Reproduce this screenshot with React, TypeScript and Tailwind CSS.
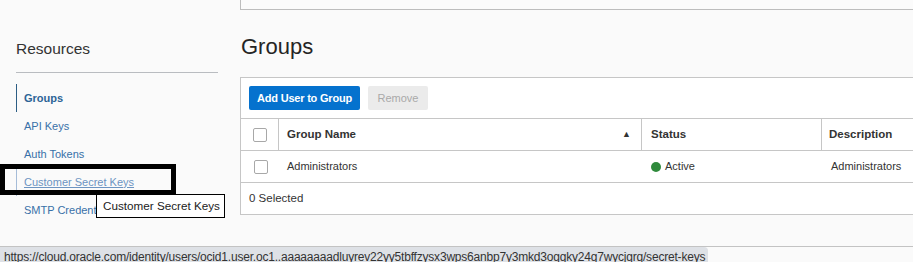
import React from 'react'

const NAV_ITEMS = [
  { label: 'Groups', state: 'active' },
  { label: 'API Keys', state: 'idle' },
  { label: 'Auth Tokens', state: 'idle' },
  { label: 'Customer Secret Keys', state: 'hover' },
  { label: 'SMTP Credentials', state: 'idle' },
]

const STATUS_URL =
  'https://cloud.oracle.com/identity/users/ocid1.user.oc1..aaaaaaaadluyrev22yy5tbffzysx3wps6anbp7y3mkd3oggky24g7wycjgrq/secret-keys'

const Checkbox = () => (
  <span className="block w-[14px] h-[14px] rounded-[2px] border border-[#a8a8a8] bg-white" />
)

const Sidebar = () => (
  <div className="w-[240px] shrink-0 pl-4 pr-[22px] pt-[39px]">
    <h2 className="text-[15.5px] leading-[20px] text-[#333]">Resources</h2>
    <div className="mt-[13px] h-px bg-[#b9bcc0]" />
    <ul className="mt-[11px]">
      {NAV_ITEMS.map((item) => (
        <li
          key={item.label}
          className={
            'h-[28px] flex items-center pl-[7px] text-[11px] whitespace-nowrap border-l ' +
            (item.state === 'active'
              ? 'border-[#2c5d84] font-bold text-[#2c6496]'
              : item.state === 'hover'
              ? 'border-[#a5bcd8] text-[#6c94c2] underline'
              : 'border-transparent text-[#3870a8]')
          }
        >
          {item.label}
        </li>
      ))}
    </ul>
  </div>
)

const GroupsTable = () => (
  <div className="w-[720px] mt-[17px] border border-[#c6c6c6] bg-white text-[11px] text-[#333]">
    <div className="h-[40px] flex items-start gap-2 pl-2 pt-[8px]">
      <button className="h-[24px] w-[111px] rounded-[2px] bg-[#0572ce] text-white font-bold text-[11px] tracking-[-0.2px]">
        Add User to Group
      </button>
      <button className="h-[24px] w-[60px] rounded-[2px] bg-[#ebebeb] text-[#a9a9a9] text-[11px]">
        Remove
      </button>
    </div>
    <div className="h-[32px] flex border-t border-[#c6c6c6] font-bold text-[11.5px]">
      <div className="w-[38px] flex items-center justify-center border-r border-[#c6c6c6]">
        <Checkbox />
      </div>
      <div className="w-[363px] flex items-center justify-between pl-2 pr-[10px] border-r border-[#c6c6c6]">
        <span>Group Name</span>
        <span className="text-[9px] leading-none">&#9650;</span>
      </div>
      <div className="w-[180px] flex items-center pl-[9px] border-r border-[#c6c6c6]">Status</div>
      <div className="flex-1 flex items-center pl-[7px]">Description</div>
    </div>
    <div className="h-[32px] flex border-t border-[#c6c6c6]">
      <div className="w-[39px] flex items-center justify-center">
        <Checkbox />
      </div>
      <div className="w-[363px] flex items-center pl-[7px]">Administrators</div>
      <div className="w-[180px] flex items-center pl-[8px] gap-[4px]">
        <span className="w-[10px] h-[10px] rounded-full bg-[#2f8a3c]" />
        Active
      </div>
      <div className="flex-1 flex items-center pl-[8px]">Administrators</div>
    </div>
    <div className="h-[32px] flex items-center pl-2 border-t border-[#c6c6c6] text-[11.5px]">0 Selected</div>
  </div>
)

export default function App() {
  return (
    <div
      className="relative w-[913px] h-[262px] overflow-hidden bg-[#fafafa]"
      style={{ fontFamily: '"Liberation Sans", Arial, sans-serif' }}
    >
      <div className="h-[247px] flex border-b border-[#c3c3c3]">
        <Sidebar />
        <div className="flex-1 min-w-0 overflow-hidden">
          <div className="h-[10px] border-l border-b border-[#bdbdbd] bg-[#fbfbfb]" />
          <h1 className="mt-[24px] text-[22px] leading-[26px] text-[#252525] pl-px">Groups</h1>
          <GroupsTable />
        </div>
      </div>

      {/* selection marker drawn over the nav */}
      <div className="absolute left-0 top-[164px] w-[176px] h-[31px] border-[5px] border-black" />

      {/* tooltip */}
      <div className="absolute left-[96px] top-[194px] w-[129px] h-[24px] border border-black bg-white flex items-center pl-[6px] text-[11.7px] text-[#222] whitespace-nowrap">
        Customer Secret Keys
      </div>

      {/* browser status bubble */}
      <div className="absolute left-0 bottom-0 w-[708px] h-[15px] bg-[#dee1e6] rounded-tr-[4px] overflow-hidden">
        <div className="pl-[4px] pt-[3px] text-[12px] leading-[15px] text-[#333] whitespace-nowrap tracking-[-0.2px]">
          {STATUS_URL}
        </div>
      </div>
    </div>
  )
}
